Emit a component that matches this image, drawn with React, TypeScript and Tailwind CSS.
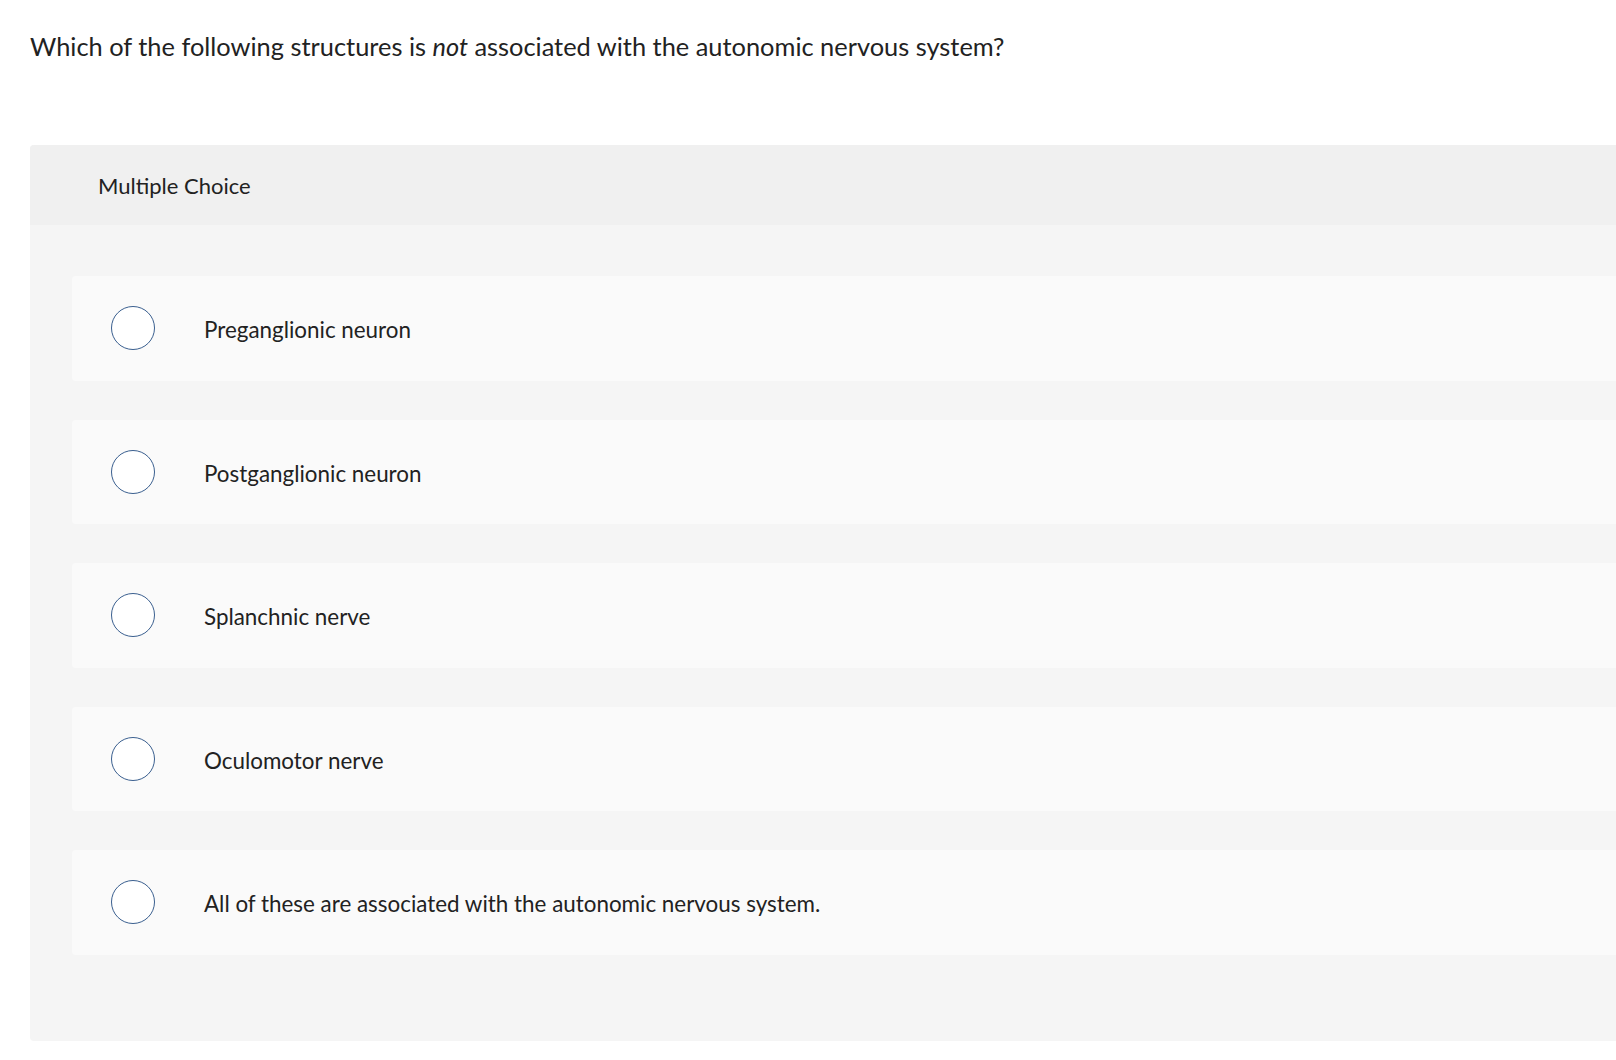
import React from "react";

const options = [
  "Preganglionic neuron",
  "Postganglionic neuron",
  "Splanchnic nerve",
  "Oculomotor nerve",
  "All of these are associated with the autonomic nervous system.",
];

export default function App() {
  return (
    <div
      className="w-[1616px] h-[1060px] overflow-hidden bg-white text-[#222222]"
      style={{ fontFamily: "Lato, 'Open Sans', sans-serif" }}
    >
      <div className="pl-[30px] pt-[28px] h-[145px]">
        <p className="text-[25.4px] leading-[36px]">
          Which of the following structures is <em>not</em> associated with the autonomic nervous system?
        </p>
      </div>
      <div className="ml-[30px] w-[1640px] h-[896px] rounded-[4px] bg-[#f5f5f5]">
        <div className="h-[80px] bg-[#f0f0f0] rounded-t-[4px] pl-[68px] flex items-center">
          <span className="text-[22px]">Multiple Choice</span>
        </div>
        <div className="pl-[42px] pt-[51px] flex flex-col gap-[39px]">
          {options.map((o) => (
            <div
              key={o}
              className="h-[104.5px] rounded-[4px] bg-[#fafafa] flex items-center pl-[39px]"
            >
              <div className="w-[44px] h-[44px] rounded-full border-[1.5px] border-[#3a5f8f] bg-white shrink-0" />
              <span className="ml-[49px] pt-[4px] text-[22.4px]">{o}</span>
            </div>
          ))}
        </div>
      </div>
    </div>
  );
}
